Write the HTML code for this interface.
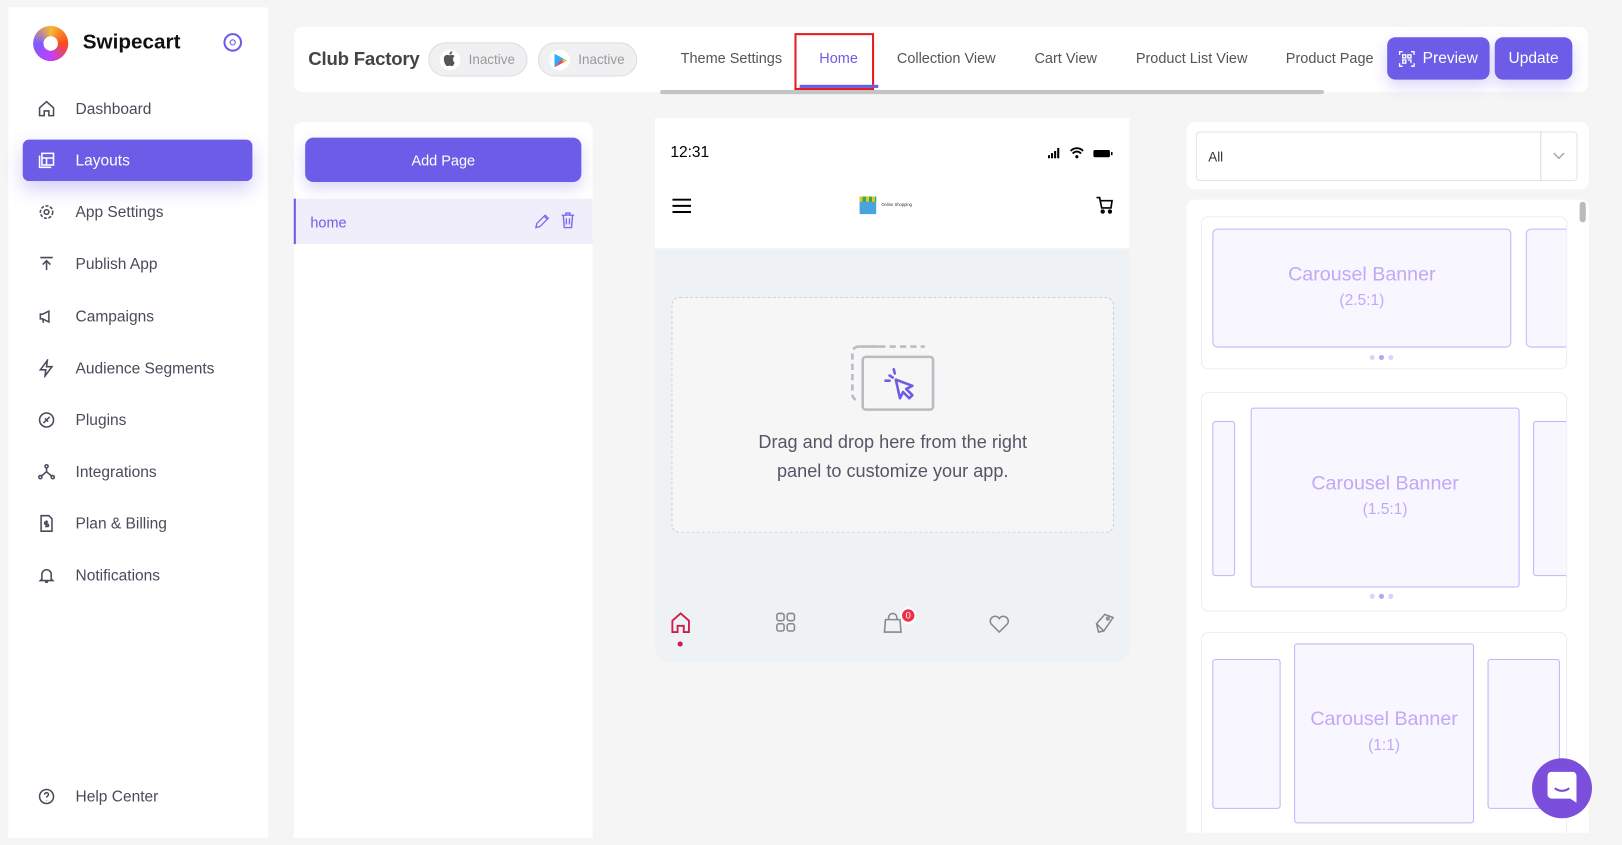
<!DOCTYPE html>
<html><head><meta charset="utf-8"><style>
*{box-sizing:border-box;margin:0;padding:0}
html,body{width:1622px;height:845px;overflow:hidden;background:#f6f6f6;font-family:"Liberation Sans",sans-serif}
#w{position:absolute;left:0;top:0;width:1568px;height:817px;transform:scale(1.03444);transform-origin:0 0;background:#f5f5f5}
.abs{position:absolute}
.side{left:8px;top:7px;width:251px;height:803px;background:#fff}
.nav{position:absolute;left:14px;width:222px;height:40px;display:flex;align-items:center;font-size:15px;color:#4a4a5a}
.nav svg{position:absolute;left:14px}
.nav span{position:absolute;left:51px}
.act{background:#6c5ce7;color:#fff;border-radius:6px;box-shadow:0 8px 18px rgba(108,92,231,.3)}
.top{left:284px;top:26px;width:1251px;height:63px;background:#fff;border-radius:8px}
.pill{position:absolute;top:15px;height:33px;border:1px solid #ddd;background:#f0f0f2;border-radius:17px;font-size:13px;color:#999;display:flex;align-items:center;padding-left:38px}
.pill i{position:absolute;left:10px;top:6px;width:20px;height:20px;border-radius:50%;background:#fff}
.tab{position:absolute;top:22px;font-size:14px;color:#555}
.btn{position:absolute;background:#6c5ce7;color:#fff;border-radius:8px;font-size:15px;display:flex;align-items:center;justify-content:center;box-shadow:0 6px 14px rgba(108,92,231,.25)}
.card{background:#fff;border-radius:8px;position:absolute}
.ban{position:absolute;border:1.5px solid #c4b3fb;background:#f8f6fe;border-radius:3px;color:#c2a8f7;text-align:center}
.dots{position:absolute;font-size:0}
.dots b{display:inline-block;width:5px;height:5px;border-radius:50%;background:#ddd3fa;margin:0 2px}
.dots b.m{background:#b9a6f2}
</style></head><body><div id="w">
<div class="abs side">
 <div class="abs" style="left:24px;top:18px;width:34px;height:34px;border-radius:50%;background:conic-gradient(#f7b733,#fc4a1a,#c040ff,#7b5cff,#f7b733)"><div style="position:absolute;left:10px;top:10px;width:14px;height:14px;border-radius:50%;background:#fff"></div></div>
 <div class="abs" style="left:72px;top:23px;font-size:20px;font-weight:bold;color:#111">Swipecart</div>
 <div class="abs" style="left:208px;top:25px;width:18px;height:18px;border:2px solid #6c5ce7;border-radius:50%"><div style="position:absolute;left:4px;top:4px;width:6px;height:6px;border:1.5px solid #6c5ce7;border-radius:50%"></div></div>
 <div class="nav" style="top:78px"><svg width="18" height="18" viewBox="0 0 24 24" fill="none" stroke="#4a4a5a" stroke-width="2"><path d="M3 11l9-8 9 8v10h-6v-6h-6v6H3z"/></svg><span>Dashboard</span></div>
 <div class="nav act" style="top:128px"><svg width="18" height="18" viewBox="0 0 24 24" fill="none" stroke="#fff" stroke-width="2"><rect x="6" y="3" width="15" height="15"/><path d="M6 9h15M12 9v9M3 6v15h15"/></svg><span>Layouts</span></div>
 <div class="nav" style="top:178px"><svg width="18" height="18" viewBox="0 0 24 24" fill="none" stroke="#4a4a5a" stroke-width="2"><circle cx="12" cy="12" r="3"/><circle cx="12" cy="12" r="8" stroke-dasharray="4 2"/></svg><span>App Settings</span></div>
 <div class="nav" style="top:228px"><svg width="18" height="18" viewBox="0 0 24 24" fill="none" stroke="#4a4a5a" stroke-width="2"><path d="M4 4h16M12 20V9M7 13l5-5 5 5"/></svg><span>Publish App</span></div>
 <div class="nav" style="top:279px"><svg width="18" height="18" viewBox="0 0 24 24" fill="none" stroke="#4a4a5a" stroke-width="2"><path d="M4 9v6h3l8 4V5L7 9zM7 15l1 5"/></svg><span>Campaigns</span></div>
 <div class="nav" style="top:329px"><svg width="18" height="18" viewBox="0 0 24 24" fill="none" stroke="#4a4a5a" stroke-width="2"><path d="M13 2L4 14h7l-1 8 9-12h-7z"/></svg><span>Audience Segments</span></div>
 <div class="nav" style="top:379px"><svg width="18" height="18" viewBox="0 0 24 24" fill="none" stroke="#4a4a5a" stroke-width="2"><circle cx="12" cy="12" r="9"/><path d="M8 16l8-8M10 10l4 4"/></svg><span>Plugins</span></div>
 <div class="nav" style="top:429px"><svg width="18" height="18" viewBox="0 0 24 24" fill="none" stroke="#4a4a5a" stroke-width="2"><circle cx="12" cy="5" r="2"/><circle cx="4" cy="19" r="2"/><circle cx="20" cy="19" r="2"/><path d="M12 7v5l-7 6M12 12l7 6"/></svg><span>Integrations</span></div>
 <div class="nav" style="top:479px"><svg width="18" height="18" viewBox="0 0 24 24" fill="none" stroke="#4a4a5a" stroke-width="2"><path d="M5 2h10l4 4v16H5z"/><path d="M12 8v9M14 10h-3a1.5 1.5 0 000 3h2a1.5 1.5 0 010 3h-3"/></svg><span>Plan &amp; Billing</span></div>
 <div class="nav" style="top:529px"><svg width="18" height="18" viewBox="0 0 24 24" fill="none" stroke="#4a4a5a" stroke-width="2"><path d="M6 17V11a6 6 0 0112 0v6l2 2H4zM10 21h4"/></svg><span>Notifications</span></div>
 <div class="nav" style="top:743px"><svg width="18" height="18" viewBox="0 0 24 24" fill="none" stroke="#4a4a5a" stroke-width="2"><circle cx="12" cy="12" r="9"/><path d="M9.5 9.5a2.5 2.5 0 115 0c0 2-2.5 2-2.5 4M12 17v.5"/></svg><span>Help Center</span></div>
</div>

<div class="abs top">
 <div class="abs" style="left:14px;top:21px;font-size:18px;color:#444;font-weight:bold;letter-spacing:-.2px">Club Factory</div>
 <div class="pill" style="left:130px;width:96px"><i></i><span style="position:absolute;left:14px;top:5px;color:#666;font-size:15px"></span>Inactive</div>
 <div class="pill" style="left:236px;width:96px"><i></i><svg class="abs" style="left:15px;top:10px" width="12" height="13" viewBox="0 0 12 13"><path d="M0 0L12 6.5 0 13z" fill="#34a8ff"/><path d="M6 6.5L12 6.5 0 13z" fill="#f44"/><path d="M8 5L12 6.5 8 8z" fill="#fc0"/></svg>Inactive</div>
 <svg class="abs" style="left:145px;top:23px" width="12" height="15" viewBox="0 0 12 15"><path d="M9 8c0-2 1.5-2.7 1.5-2.7C9.6 4 8.3 4 7.8 4 6.8 4 6.2 4.5 5.6 4.5S4.3 4 3.4 4C2 4 0 5 0 8c0 3 2 7 3.5 7 .8 0 1.2-.5 2.1-.5s1.2.5 2.1.5C9 15 10 13 10.5 11.5 10.5 11.5 9 11 9 8zM7.5 2.8C8 2.2 8.3 1.3 8.2.5 7.4.6 6.6 1 6.1 1.6c-.4.5-.8 1.4-.7 2.2.8 0 1.6-.4 2.1-1z" fill="#555"/></svg>
 <div class="tab" style="left:374px">Theme Settings</div>
 <div class="tab" style="left:508px;color:#6c5ce7">Home</div>
 <div class="abs" style="left:484px;top:6px;width:77px;height:55px;border:2px solid #e41e1e"></div>
 <div class="abs" style="left:489px;top:56px;width:76px;height:3px;background:#6c5ce7"></div>
 <div class="tab" style="left:583px">Collection View</div>
 <div class="tab" style="left:716px">Cart View</div>
 <div class="tab" style="left:814px">Product List View</div>
 <div class="tab" style="left:959px">Product Page</div>
 <div class="abs" style="left:354px;top:61px;width:642px;height:4px;background:#c4c4c4;border-radius:2px"></div>
 <div class="btn" style="left:1057px;top:10px;width:99px;height:41px"><svg width="16" height="16" viewBox="0 0 16 16" fill="none" stroke="#fff" stroke-width="1.3" style="margin-right:7px"><path d="M1 4V1h3M12 1h3v3M15 12v3h-3M4 15H1v-3"/><rect x="4" y="4" width="3" height="3"/><rect x="9" y="4" width="3" height="3"/><rect x="4" y="9" width="3" height="3"/><path d="M9 9h3v3"/></svg>Preview</div>
 <div class="btn" style="left:1161px;top:10px;width:75px;height:41px">Update</div>
</div>

<div class="card" style="left:284px;top:118px;width:289px;height:692px;border-radius:8px 8px 0 0">
 <div class="btn" style="left:11px;top:15px;width:267px;height:43px;font-size:14px">Add Page</div>
 <div class="abs" style="left:0;top:74px;width:289px;height:44px;background:#f1eefc;border-left:2px solid #6c5ce7"></div>
 <div class="abs" style="left:16px;top:89px;font-size:14px;color:#6c5ce7">home</div>
 <svg class="abs" style="left:232px;top:88px" width="16" height="16" viewBox="0 0 16 16" fill="none" stroke="#7b6cf0" stroke-width="1.3"><path d="M2 14l1-4 8-8 3 3-8 8zM10 3l3 3"/></svg>
 <svg class="abs" style="left:258px;top:87px" width="14" height="16" viewBox="0 0 14 16" fill="none" stroke="#7b6cf0" stroke-width="1.4"><path d="M1 3h12M5 3V1h4v2M2.5 3l1 12h7l1-12M5.5 6v6M8.5 6v6"/></svg>
</div>

<div class="abs" style="left:633px;top:114px;width:459px;height:526px;background:#eef2f5;border-radius:0 0 14px 14px;overflow:hidden">
 <div class="abs" style="left:0;top:0;width:459px;height:126px;background:#fff"></div>
 <div class="abs" style="left:15px;top:25px;font-size:15px;color:#000">12:31</div>
 <svg class="abs" style="left:380px;top:28px" width="66" height="12" viewBox="0 0 66 12"><rect x="0" y="8" width="2" height="3"/><rect x="3" y="6" width="2" height="5"/><rect x="6" y="4" width="2" height="7"/><rect x="9" y="1" width="2" height="10"/><path d="M22 4a8 8 0 0112 0M24 6.5a5 5 0 018 0" stroke="#000" stroke-width="1.8" fill="none"/><circle cx="28" cy="9.5" r="1.5"/><rect x="44" y="3" width="16" height="7" rx="1.5"/><rect x="61" y="5" width="1.5" height="3"/></svg>
 <svg class="abs" style="left:17px;top:78px" width="19" height="14" viewBox="0 0 19 14"><path d="M0 1h18M0 7h18M0 13h18" stroke="#000" stroke-width="2"/></svg>
 <div class="abs" style="left:198px;top:76px;width:16px;height:17px;background:#4aa3df"><div style="height:5px;background:repeating-linear-gradient(90deg,#f1c40f 0 3px,#27ae60 3px 6px)"></div></div>
 <div class="abs" style="left:219px;top:81px;font-size:4px;color:#333">Online Shopping</div>
 <svg class="abs" style="left:426px;top:76px" width="17" height="17" viewBox="0 0 17 17" fill="none" stroke="#000" stroke-width="1.6"><path d="M1 1h3l2 10h9l1-7H5"/><circle cx="7" cy="14.5" r="1.3" fill="#000"/><circle cx="14" cy="14.5" r="1.3" fill="#000"/></svg>
 <div class="abs" style="left:16px;top:173px;width:428px;height:228px;border:1.5px dashed #ccc;border-radius:8px;background:#f6f6f7"></div>
 <svg class="abs" style="left:189px;top:219px" width="82" height="65" viewBox="0 0 82 65" fill="none"><path d="M28 2h-20a6 6 0 00-6 6v40a6 6 0 006 6" stroke="#bbbbc4" stroke-width="2.5" stroke-dasharray="6 4"/><path d="M8 2h64" stroke="#bbbbc4" stroke-width="2.5" stroke-dasharray="6 4"/><rect x="12" y="12" width="68" height="51" rx="3" stroke="#bbbbc4" stroke-width="2.5" fill="#f6f6f7"/><path d="M44 34l16 6-6 3 6 6-3 3-6-6-3 6z" stroke="#6c5ce7" stroke-width="2.5" stroke-linejoin="round"/><path d="M38 30l3 2M42 24l1 4M34 35l4 0" stroke="#6c5ce7" stroke-width="2.5" stroke-linecap="round"/></svg>
 <div class="abs" style="left:16px;top:299px;width:428px;text-align:center;font-size:17.5px;line-height:28px;color:#555566">Drag and drop here from the right<br>panel to customize your app.</div>
 <svg class="abs" style="left:14px;top:477px" width="22" height="22" viewBox="0 0 22 22" fill="none" stroke="#cc1f4a" stroke-width="1.8"><path d="M3 20V9l8-7 8 7v11h-5v-6h-6v6z"/></svg>
 <div class="abs" style="left:22px;top:506px;width:5px;height:5px;border-radius:50%;background:#cc1f4a"></div>
 <svg class="abs" style="left:116px;top:477px" width="22" height="22" viewBox="0 0 22 22" fill="none" stroke="#888" stroke-width="1.5"><rect x="2" y="2" width="7" height="7" rx="2"/><rect x="12" y="2" width="7" height="7" rx="2"/><rect x="2" y="12" width="7" height="7" rx="2"/><rect x="12" y="12" width="7" height="7" rx="2"/></svg>
 <svg class="abs" style="left:219px;top:477px" width="22" height="22" viewBox="0 0 22 22" fill="none" stroke="#888" stroke-width="1.5"><path d="M3 20l1-12h14l1 12zM7 8V6a4 4 0 018 0v2"/></svg>
 <div class="abs" style="left:237px;top:473px;width:16px;height:16px;border-radius:50%;background:#f03049;border:2px solid #fff;color:#fff;font-size:9px;text-align:center;line-height:12px">0</div>
 <svg class="abs" style="left:322px;top:478px" width="22" height="22" viewBox="0 0 22 22" fill="none" stroke="#888" stroke-width="1.5"><path d="M11 19L3 11a4.5 4.5 0 018-5 4.5 4.5 0 018 5z"/></svg>
 <svg class="abs" style="left:424px;top:477px" width="22" height="22" viewBox="0 0 22 22" fill="none" stroke="#888" stroke-width="1.5"><path d="M3 12l8-9 8 3-9 13zM3 12l2 8 5-1"/><circle cx="14" cy="7" r="1.2"/></svg>
</div>

<div class="card" style="left:1147px;top:118px;width:389px;height:65px">
 <div class="abs" style="left:9px;top:9px;width:369px;height:48px;border:1px solid #e3e3e8;border-radius:4px"></div>
 <div class="abs" style="left:342px;top:9px;width:1px;height:48px;background:#ddd"></div>
 <div class="abs" style="left:21px;top:26px;font-size:13px;color:#333">All</div>
 <svg class="abs" style="left:354px;top:29px" width="12" height="8" viewBox="0 0 12 8" fill="none" stroke="#aaa" stroke-width="1.5"><path d="M1 1l5 5 5-5"/></svg>
</div>
<div class="card" style="left:1147px;top:193px;width:389px;height:612px;overflow:hidden;border-radius:8px 8px 0 0">
 <div class="abs" style="left:380px;top:2px;width:6px;height:20px;background:#bbb;border-radius:3px"></div>
 <div class="abs" style="left:14px;top:16px;width:354px;height:148px;border:1px solid #eee;border-radius:7px;overflow:hidden">
  <div class="ban" style="left:10px;top:11px;width:289px;height:115px;border-radius:5px"><div style="margin-top:33px;font-size:19px">Carousel Banner</div><div style="margin-top:5px;font-size:15px">(2.5:1)</div></div>
  <div class="ban" style="left:313px;top:11px;width:60px;height:115px;border-radius:5px"></div>
  <div class="dots" style="left:160px;top:133px"><b></b><b class="m"></b><b></b></div>
 </div>
 <div class="abs" style="left:14px;top:186px;width:354px;height:212px;border:1px solid #eee;border-radius:7px;overflow:hidden">
  <div class="ban" style="left:10px;top:27px;width:22px;height:150px"></div>
  <div class="ban" style="left:47px;top:14px;width:260px;height:174px"><div style="margin-top:62px;font-size:19px">Carousel Banner</div><div style="margin-top:5px;font-size:15px">(1.5:1)</div></div>
  <div class="ban" style="left:320px;top:27px;width:40px;height:150px"></div>
  <div class="dots" style="left:160px;top:194px"><b></b><b class="m"></b><b></b></div>
 </div>
 <div class="abs" style="left:14px;top:418px;width:354px;height:220px;border:1px solid #eee;border-radius:7px;overflow:hidden">
  <div class="ban" style="left:10px;top:25px;width:66px;height:145px"></div>
  <div class="ban" style="left:89px;top:10px;width:174px;height:174px"><div style="margin-top:62px;font-size:19px">Carousel Banner</div><div style="margin-top:5px;font-size:15px">(1:1)</div></div>
  <div class="ban" style="left:276px;top:25px;width:70px;height:145px"></div>
 </div>
</div>
<div class="abs" style="left:1481px;top:733px;width:58px;height:58px;border-radius:50%;background:#7b4fdc"><svg class="abs" style="left:15px;top:13px" width="28" height="30" viewBox="0 0 28 30"><path d="M4 0h20a4 4 0 014 4v26l-6-4H4a4 4 0 01-4-4V4a4 4 0 014-4z" fill="#fff"/><path d="M7 16q7 5 14 0" stroke="#7b4fdc" stroke-width="2" fill="none"/></svg></div>
</div></body></html>
